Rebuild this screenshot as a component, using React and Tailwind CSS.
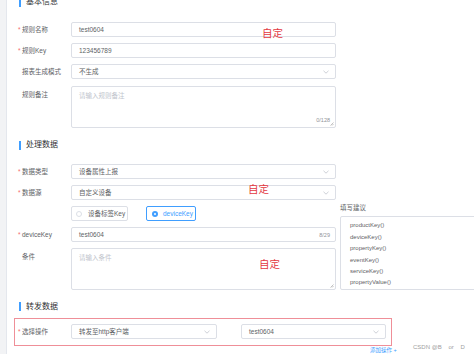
import React from 'react';

const FONT = { fontFamily: '"Liberation Sans", "Noto Sans CJK SC", sans-serif' };

const Chevron = () => (
  <svg width="6" height="4" viewBox="0 0 6 4" className="ml-auto">
    <path d="M0.5 0.8 L3 3.2 L5.5 0.8" fill="none" stroke="#c0c4cc" strokeWidth="0.8" />
  </svg>
);

const Label = ({ required, children, top }) => (
  <div className={`w-[64px] shrink-0 pl-[11px] flex text-[6.5px] leading-[8px] text-[#606266] ${top ? 'pt-[5px] self-start' : 'items-center'}`}>
    <span className="w-[4px] text-[#f56c6c]">{required ? '*' : ''}</span>
    {children}
  </div>
);

const Input = ({ value, counter, w = 'w-[265px]' }) => (
  <div className={`${w} h-[15px] border border-[#dcdfe6] rounded-[2px] pl-[7px] pr-[5px] flex items-center text-[6.5px] text-[#606266]`}>
    <span>{value}</span>
    {counter && <span className="ml-auto text-[5.5px] text-[#909399]">{counter}</span>}
  </div>
);

const Select = ({ value, w = 'w-[265px]' }) => (
  <div className={`${w} h-[15px] border border-[#dcdfe6] rounded-[2px] pl-[7px] pr-[6px] flex items-center text-[6.5px] text-[#606266]`}>
    <span>{value}</span>
    <Chevron />
  </div>
);

const Textarea = ({ placeholder, counter }) => (
  <div className="relative w-[265px] h-[42px] border border-[#dcdfe6] rounded-[2px] pl-[7px] pt-[5px] text-[6.5px] leading-[8px] text-[#c0c4cc]">
    {placeholder}
    {counter && <span className="absolute right-[5px] bottom-[3px] text-[5.5px] text-[#909399]">{counter}</span>}
    <svg width="4" height="4" viewBox="0 0 4 4" className="absolute right-[1px] bottom-[1px]">
      <path d="M0.5 3.5 L3.5 0.5 M2 3.5 L3.5 2" stroke="#9a9a9a" strokeWidth="0.6" />
    </svg>
  </div>
);

const Section = ({ title, className }) => (
  <div className={`h-[13px] flex items-center ${className}`}>
    <div className="ml-[12px] w-[2px] h-[9px] bg-[#409eff]" />
    <div className="ml-[5px] text-[8px] text-[#303133]">{title}</div>
  </div>
);

const Row = ({ className = '', children }) => (
  <div className={`flex items-center ${className}`}>{children}</div>
);

const suggestions = ['productKey()', 'deviceKey()', 'propertyKey()', 'eventKey()', 'serviceKey()', 'propertyValue()'];

export default function App() {
  return (
    <div className="relative w-[474px] h-[354px] overflow-hidden bg-white flex" style={FONT}>
      <div className="w-[7px] shrink-0 bg-[#f2f3f5] border-r border-[#e4e7ed]" />
      <div className="flex-1 flex flex-col">
        <Section title="基本信息" className="mt-[-4px]" />
        <Row className="mt-[14px]">
          <Label required>规则名称</Label>
          <Input value="test0604" />
        </Row>
        <Row className="mt-[6px]">
          <Label required>规则Key</Label>
          <Input value="123456789" />
        </Row>
        <Row className="mt-[6px]">
          <Label>报表生成模式</Label>
          <Select value="不生成" />
        </Row>
        <Row className="mt-[7px]">
          <Label top>规则备注</Label>
          <Textarea placeholder="请输入规则备注" counter="0/128" />
        </Row>

        <Section title="处理数据" className="mt-[11px]" />
        <Row className="mt-[13px]">
          <Label required>数据类型</Label>
          <Select value="设备属性上报" />
        </Row>
        <Row className="mt-[6px]">
          <Label required>数据源</Label>
          <Select value="自定义设备" />
        </Row>

        <div className="mt-[6px] flex">
          <div className="flex flex-col">
            <Row>
              <div className="w-[64px] shrink-0" />
              <div className="w-[57px] h-[15px] border border-[#dcdfe6] rounded-[2px] flex items-center pl-[4px] text-[6.5px] text-[#606266]">
                <span className="w-[6px] h-[6px] rounded-full border border-[#dcdfe6] bg-white" />
                <span className="ml-[6px]">设备标签Key</span>
              </div>
              <div className="ml-[18px] w-[50px] h-[15px] border border-[#409eff] rounded-[2px] flex items-center pl-[5px] text-[6.5px] text-[#409eff]">
                <span className="w-[6px] h-[6px] rounded-full bg-[#409eff] flex items-center justify-center">
                  <span className="w-[2px] h-[2px] rounded-full bg-white" />
                </span>
                <span className="ml-[5px]">deviceKey</span>
              </div>
            </Row>
            <Row className="mt-[6px]">
              <Label required>deviceKey</Label>
              <Input value="test0604" counter="8/29" />
            </Row>
            <Row className="mt-[6px]">
              <Label top>条件</Label>
              <Textarea placeholder="请输入条件" />
            </Row>
          </div>
          <div className="ml-[4px] mt-[-4px] flex flex-col">
            <div className="h-[10px] flex items-center text-[6.5px] text-[#606266]">填写建议</div>
            <div className="mt-[4px] w-[140px] h-[74px] border border-[#dcdfe6] rounded-[2px] pl-[9px] pt-[3px] flex flex-col text-[6px] leading-[11.4px] text-[#606266]">
              {suggestions.map((s) => (
                <div key={s}>{s}</div>
              ))}
            </div>
          </div>
        </div>

        <Section title="转发数据" className="mt-[10px]" />
        <div className="mt-[5px] ml-[7px] w-[378px] h-[30px] border border-[#ef8f98] flex items-center">
          <div className="w-[56px] shrink-0 pl-[3px] flex text-[6.5px] text-[#606266]">
            <span className="w-[4px] text-[#f56c6c]">*</span>选择操作
          </div>
          <Select value="转发至http客户端" w="w-[146px]" />
          <div className="ml-[24px]">
            <Select value="test0604" w="w-[145px]" />
          </div>
        </div>
        <div className="ml-[363px] text-[5.5px] leading-[8px] text-[#409eff]">添加操作 +</div>
      </div>

      <div className="absolute left-[262px] top-[28px] text-[10.5px] leading-none text-[#e3383f]">自定</div>
      <div className="absolute left-[248px] top-[184px] text-[10.5px] leading-none text-[#e3383f]">自定</div>
      <div className="absolute left-[259px] top-[259px] text-[10.5px] leading-none text-[#e3383f]">自定</div>
      <div className="absolute left-[413px] top-[343px] whitespace-pre text-[6px] leading-[8px] text-[#a0a0a0]">CSDN @B    or    D</div>
    </div>
  );
}
